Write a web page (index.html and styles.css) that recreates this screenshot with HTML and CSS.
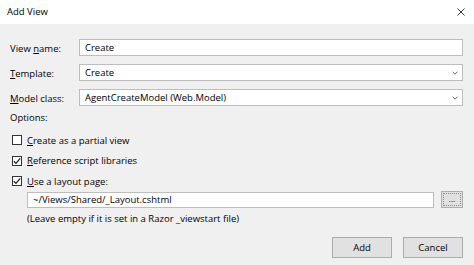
FILE: index.html
```html
<!DOCTYPE html>
<html>
<head>
<meta charset="utf-8">
<link rel="stylesheet" href="styles.css">
</head>
<body>
<div class="dialog">
  <div class="titlebar">
    <span class="title">Add View</span>
    <svg class="close" width="8" height="8" viewBox="0 0 8 8"><path d="M0.5 0.5L7.5 7.5M7.5 0.5L0.5 7.5" stroke="#222" stroke-width="0.9" fill="none"/></svg>
  </div>
  <div class="content">
    <div class="field">
      <label class="label">View <u>n</u>ame:</label>
      <div class="input">Create</div>
    </div>
    <div class="field">
      <label class="label"><u>T</u>emplate:</label>
      <div class="input select">Create<svg class="chev" width="6" height="4" viewBox="0 0 6 4"><path d="M0.5 0.7L3 3.2L5.5 0.7" stroke="#666" stroke-width="1" fill="none"/></svg></div>
    </div>
    <div class="field">
      <label class="label"><u>M</u>odel class:</label>
      <div class="input select">AgentCreateModel (Web.Model)<svg class="chev" width="6" height="4" viewBox="0 0 6 4"><path d="M0.5 0.7L3 3.2L5.5 0.7" stroke="#666" stroke-width="1" fill="none"/></svg></div>
    </div>
    <div class="options-label">Options:</div>
    <div class="checks">
      <div class="check-row">
        <span class="box"></span>
        <span class="check-text"><u>C</u>reate as a partial view</span>
      </div>
      <div class="check-row">
        <span class="box"><svg width="10" height="10" viewBox="0 0 10 10"><path d="M1.8 5.2L4 7.4L8.2 2.4" stroke="#222" stroke-width="1.3" fill="none"/></svg></span>
        <span class="check-text"><u>R</u>eference script libraries</span>
      </div>
      <div class="check-row">
        <span class="box"><svg width="10" height="10" viewBox="0 0 10 10"><path d="M1.8 5.2L4 7.4L8.2 2.4" stroke="#222" stroke-width="1.3" fill="none"/></svg></span>
        <span class="check-text"><u>U</u>se a layout page:</span>
      </div>
    </div>
    <div class="layout-row">
      <div class="input layout-input">~/Views/Shared/_Layout.cshtml</div>
      <div class="browse"><span class="browse-inner">...</span></div>
    </div>
    <div class="hint">(Leave empty if it is set in a Razor _viewstart file)</div>
    <div class="buttons">
      <div class="btn">Add</div>
      <div class="btn">Cancel</div>
    </div>
  </div>
</div>
</body>
</html>
```
FILE: styles.css
```css
* { box-sizing: border-box; }
html, body { margin: 0; padding: 0; }
body {
  width: 474px;
  height: 265px;
  background: #f0f0f0;
  font-family: "Open Sans", "Noto Sans", "Liberation Sans", sans-serif;
  font-size: 9.5px;
  color: #000;
  overflow: hidden;
}
.dialog { width: 474px; height: 265px; background: #f0f0f0; }
.titlebar {
  height: 24px;
  background: #fff;
  display: flex;
  align-items: center;
  justify-content: space-between;
  padding: 0 9px 2px 7px;
}
.title { font-size: 9.5px; }
.close { display: block; margin-top: 1px; }
.content { padding: 15px 11px 0 10px; }
.field {
  display: flex;
  align-items: center;
  height: 17px;
  margin-bottom: 8px;
}
.label { width: 69px; flex: none; padding-top: 1px; }
.input {
  flex: 1;
  height: 17px;
  background: #fff;
  border: 1px solid #bdbdbd;
  display: flex;
  align-items: center;
  padding: 0 5px;
  white-space: nowrap;
}
.select { justify-content: space-between; padding-right: 4px; }
.chev { display: block; }
.options-label { height: 14px; margin-top: -3px; line-height: 14px; }
.checks { margin-top: 5px; }
.check-row {
  display: flex;
  align-items: center;
  height: 20.5px;
  padding-left: 2px;
}
.box {
  width: 10px;
  height: 10px;
  border: 1px solid #333;
  background: #fff;
  flex: none;
  position: relative;
}
.box svg { position: absolute; left: -1px; top: -1px; }
.check-text { margin-left: 5px; }
.layout-row {
  display: flex;
  align-items: center;
  padding-left: 17px;
  margin-top: -0.5px;
  height: 17px;
}
.layout-input { height: 16px; flex: 1; }
.browse {
  width: 22px;
  height: 17px;
  margin-left: 7px;
  background: #e1e1e1;
  border: 1px solid #adadad;
  padding: 1px;
  flex: none;
}
.browse-inner {
  display: flex;
  justify-content: center;
  align-items: flex-end;
  width: 100%;
  height: 100%;
  border: 1px dotted #8a8a8a;
  font-size: 8px;
  line-height: 8px;
  padding-bottom: 2px;
}
.hint { padding-left: 17px; margin-top: 3.5px; height: 14px; line-height: 14px; }
.buttons {
  display: flex;
  justify-content: flex-end;
  gap: 11px;
  margin-top: 11px;
}
.btn {
  width: 60px;
  height: 21px;
  background: #e1e1e1;
  border: 1px solid #adadad;
  display: flex;
  align-items: center;
  justify-content: center;
}
```
